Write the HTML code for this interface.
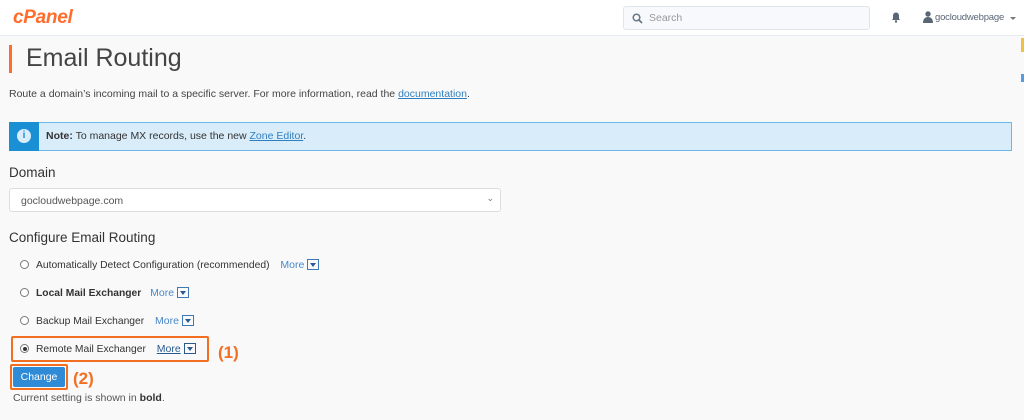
<!DOCTYPE html>
<html><head><meta charset="utf-8"><style>
*{box-sizing:border-box;margin:0;padding:0}
body{width:1024px;height:420px;overflow:hidden;background:#f9f9f9;font-family:"Liberation Sans",sans-serif;color:#333;position:relative;font-size:11px}
.hdr{position:absolute;left:0;top:0;width:1024px;height:36px;background:#fff;border-bottom:1px solid #e6ebf2}
.logo{position:absolute;left:13px;top:7px;font-size:19px;font-weight:bold;font-style:italic;color:#ff6c2c;letter-spacing:-0.3px}
.search{position:absolute;left:623px;top:6px;width:247px;height:24px;border:1px solid #e0e5ec;border-radius:3px;background:#f7f9fc;color:#999;font-size:10.5px;padding:5px 0 0 25px}
.abs{position:absolute}
a{color:#2f7fbf;text-decoration:underline}
.more{color:#4a88c9;font-size:10.5px}
.dd{display:inline-block;width:12px;height:11px;border:1.5px solid #3f79b5;vertical-align:-2px;margin-left:3px;position:relative}
.dd:after{content:"";position:absolute;left:2px;top:2.5px;border-left:3px solid transparent;border-right:3px solid transparent;border-top:4px solid #2a5a8f}
.radio{position:absolute;width:9px;height:9px;border:1px solid #777;border-radius:50%;background:#fff}
.lbl{position:absolute;font-size:10.3px;color:#333;white-space:nowrap}
</style></head><body>
<div class="hdr">
<div class="logo">cPanel</div>
<div class="search"><svg class="abs" style="left:8px;top:6px" width="11" height="11" viewBox="0 0 11 11"><circle cx="4.5" cy="4.5" r="3.3" fill="none" stroke="#6b7785" stroke-width="1.5"/><path d="M7 7l3 3" stroke="#6b7785" stroke-width="1.8"/></svg>Search</div>
<svg class="abs" style="left:891px;top:12px" width="10" height="11" viewBox="0 0 10 11"><path d="M5 0.5c-2 0-3 1.5-3 3.5v2.5L1 8h8L8 6.5V4c0-2-1-3.5-3-3.5z" fill="#5a6675"/><circle cx="5" cy="9.5" r="1.2" fill="#5a6675"/></svg>
<svg class="abs" style="left:923px;top:11px" width="10" height="12" viewBox="0 0 10 12"><circle cx="5" cy="3" r="2.7" fill="#5a6675"/><path d="M0 12c0-4 2-6 5-6s5 2 5 6z" fill="#5a6675"/></svg>
<div class="abs" style="left:935px;top:12px;color:#5a6675;font-size:9.5px;letter-spacing:-0.2px">gocloudwebpage</div>
<div class="abs" style="left:1010px;top:17px;border-left:3px solid transparent;border-right:3px solid transparent;border-top:3px solid #777"></div>
</div>
<div class="abs" style="left:1021px;top:38px;width:3px;height:14px;background:#f0c040"></div>
<div class="abs" style="left:1021px;top:74px;width:3px;height:8px;background:#5a9be0"></div>
<div class="abs" style="left:9px;top:45px;width:3px;height:28px;background:#ff6c2c"></div>
<div class="abs" style="left:26px;top:44px;font-size:25px;color:#444">Email Routing</div>
<div class="abs" style="left:9px;top:88px;font-size:10.5px;color:#444">Route a domain’s incoming mail to a specific server. For more information, read the <a>documentation</a>.</div>
<div class="abs" style="left:9px;top:122px;width:1003px;height:29px;background:#d9ecf9;border:1px solid #69b9e8"></div>
<div class="abs" style="left:9px;top:122px;width:30px;height:29px;background:#1a8fd4"></div>
<div class="abs" style="left:17px;top:129px;width:14px;height:14px;border-radius:50%;background:#d9ecf9;color:#1a8fd4;font-weight:bold;font-size:10px;text-align:center;line-height:14px">i</div>
<div class="abs" style="left:46px;top:130px;font-size:10.5px;color:#333"><b>Note:</b> To manage MX records, use the new <a>Zone Editor</a>.</div>
<div class="abs" style="left:9px;top:165px;font-size:13.5px;color:#333">Domain</div>
<div class="abs" style="left:9px;top:188px;width:492px;height:24px;background:#fff;border:1px solid #ddd;border-radius:3px;font-size:10.5px;color:#555;padding:6px 0 0 11px">gocloudwebpage.com<span class="abs" style="right:6px;top:4px;font-size:9px;color:#777">&#8964;</span></div>
<div class="abs" style="left:9px;top:230px;font-size:13.5px;color:#333">Configure Email Routing</div>
<div class="radio" style="left:20px;top:260px"></div>
<div class="lbl" style="left:36px;top:259px">Automatically Detect Configuration (recommended) <span class="more" style="margin-left:8px">More</span><span class="dd"></span></div>
<div class="radio" style="left:20px;top:288px"></div>
<div class="lbl" style="left:36px;top:287px"><b>Local Mail Exchanger</b> <span class="more" style="margin-left:6px">More</span><span class="dd"></span></div>
<div class="radio" style="left:20px;top:316px"></div>
<div class="lbl" style="left:36px;top:315px">Backup Mail Exchanger <span class="more" style="margin-left:8px">More</span><span class="dd"></span></div>
<div class="abs" style="left:11px;top:336px;width:198px;height:26px;border:2px solid #f26f21;border-radius:2px"></div>
<div class="radio" style="left:20px;top:344px"><div style="width:4px;height:4px;border-radius:50%;background:#333;margin:1.5px"></div></div>
<div class="lbl" style="left:36px;top:343px">Remote Mail Exchanger <span class="more" style="margin-left:8px;color:#2a5a8f;text-decoration:underline">More</span><span class="dd" style="border-color:#2a5a8f"></span></div>
<div class="abs" style="left:218px;top:343px;font-size:17px;font-weight:bold;color:#f26f21">(1)</div>
<div class="abs" style="left:10px;top:364px;width:58px;height:26px;border:2px solid #f26f21;border-radius:2px"></div>
<div class="abs" style="left:13px;top:367px;width:52px;height:20px;background:#2f8bd6;border-radius:2px;color:#fff;font-size:10.5px;text-align:center;line-height:20px">Change</div>
<div class="abs" style="left:73px;top:369px;font-size:17px;font-weight:bold;color:#f26f21">(2)</div>
<div class="abs" style="left:13px;top:392px;font-size:10.5px;color:#555">Current setting is shown in <b style="color:#333">bold</b>.</div>
</body></html>
